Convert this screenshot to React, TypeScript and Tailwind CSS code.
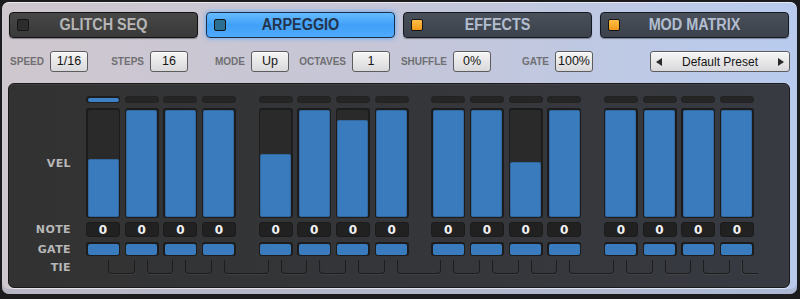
import React from "react";

const velocities = [0.54, 1, 1, 1, 0.58, 1, 0.9, 1, 1, 1, 0.51, 1, 1, 1, 1, 1];

const tabs = [
  { name: "GLITCH SEQ", kind: "dark", led: "bg-[#2c2c2c]" },
  { name: "ARPEGGIO", kind: "active", led: "bg-[#2b6f93]" },
  { name: "EFFECTS", kind: "blue", led: "bg-gradient-to-b from-[#ffc044] to-[#f19a16]" },
  { name: "MOD MATRIX", kind: "blue", led: "bg-gradient-to-b from-[#ffc044] to-[#f19a16]" },
];

const params = [
  { label: "SPEED", value: "1/16", w: "w-[78px]" },
  { label: "STEPS", value: "16", w: "w-[100px]" },
  { label: "MODE", value: "Up", w: "w-[101px]" },
  { label: "OCTAVES", value: "1", w: "w-[101px]" },
  { label: "SHUFFLE", value: "0%", w: "w-[101px]" },
  { label: "GATE", value: "100%", w: "w-[102px]" },
];

const groups = [0, 1, 2, 3];

// rangée de pas : 4 groupes de 4
const StepRow = ({ render }: { render: (i: number) => React.ReactNode }) => (
  <div className="flex gap-[22.67px]">
    {groups.map((g) => (
      <div key={g} className="flex gap-[4.67px]">
        {[0, 1, 2, 3].map((s) => (
          <div key={s} className="w-[34px]">
            {render(g * 4 + s)}
          </div>
        ))}
      </div>
    ))}
  </div>
);

const Label = ({ children }: { children: React.ReactNode }) => (
  <div className="w-[63px] pr-[1px] text-right text-[11px] font-bold leading-none tracking-[0.4px] text-[#b8b8b8] font-['DejaVu_Sans',sans-serif]">
    {children}
  </div>
);

export default function App() {
  return (
    <div className="w-[800px] h-[299px] bg-[#1c1c1e] pt-[2px] pl-[2px] pr-[3px] pb-[5px]">
      <div className="h-full rounded-[7px] bg-gradient-to-r from-[#cfc7ce] via-[#c5c6d8] to-[#b8cbee] shadow-[inset_0_1px_0_rgba(255,255,255,0.6),inset_0_-5px_0_rgba(160,165,185,0.5)] pt-[10px] font-['Liberation_Sans',sans-serif]">
        {/* onglets */}
        <div className="grid grid-cols-4 gap-[8px] pl-[7px] pr-[8px]">
          {tabs.map((t) => (
            <div
              key={t.name}
              className={
                "h-[26px] rounded-[4px] border grid grid-cols-[22px_1fr_22px] items-center " +
                (t.kind === "active"
                  ? "border-[#16304e] bg-gradient-to-b from-[#66bbff] via-[#40a0f8] to-[#4eaafc] shadow-[0_0_5px_rgba(70,160,255,0.9)]"
                  : t.kind === "dark"
                  ? "border-[#121212] bg-gradient-to-b from-[#474747] to-[#393939] shadow-[0_1px_1px_rgba(0,0,0,0.35)]"
                  : "border-[#141820] bg-gradient-to-b from-[#4a505a] to-[#3c424b] shadow-[0_1px_1px_rgba(0,0,0,0.35)]")
              }
            >
              <div className={"ml-[7px] w-[12px] h-[12px] rounded-[2px] border border-[#151515] " + t.led} />
              <div
                className={
                  "text-center text-[16px] font-bold leading-none scale-x-[0.9] " +
                  (t.kind === "active" ? "text-[#24344d]" : t.kind === "dark" ? "text-[#b6b6b6]" : "text-[#b2bed0]")
                }
              >
                {t.name}
              </div>
              <div />
            </div>
          ))}
        </div>

        {/* paramètres */}
        <div className="flex items-center mt-[13px] pl-[8px] pr-[7px] h-[21px]">
          {params.map((p) => (
            <div key={p.label} className={"flex items-center justify-end gap-[6px] " + p.w}>
              <span className="text-[10px] font-bold text-[#6f6f72]">{p.label}</span>
              <div className="w-[38px] h-[21px] rounded-[3px] border border-[#5c5c5e] bg-gradient-to-b from-[#f6f6f6] to-[#d9d9db] flex items-center justify-center text-[12.5px] text-[#151515] shadow-[inset_0_1px_0_#fff]">
                {p.value}
              </div>
            </div>
          ))}
          <div className="ml-auto w-[140px] h-[21px] rounded-[3px] border border-[#5c5c5e] bg-gradient-to-b from-[#f6f6f6] to-[#d9d9db] flex items-center justify-between px-[5px] text-[12px] text-[#151515] shadow-[inset_0_1px_0_#fff]">
            <svg width="6" height="8" viewBox="0 0 6 8">
              <path d="M6 0 L0 4 L6 8 Z" fill="#2a2a2a" />
            </svg>
            <span>Default Preset</span>
            <svg width="6" height="8" viewBox="0 0 6 8">
              <path d="M0 0 L6 4 L0 8 Z" fill="#2a2a2a" />
            </svg>
          </div>
        </div>

        {/* séquenceur */}
        <div className="mt-[11px] ml-[6px] mr-[7px] h-[205px] rounded-[6px] border border-[#1a1a1a] bg-gradient-to-r from-[#323232] to-[#373a41] shadow-[0_1px_0_rgba(255,255,255,0.5),inset_0_1px_0_rgba(255,255,255,0.06)] pt-[12px]">
          {/* indicateurs */}
          <div className="flex">
            <div className="w-[63px]" />
            <div className="ml-[14px]">
              <StepRow
                render={(i) =>
                  i === 0 ? (
                    <div className="h-[7px] rounded-[3px] bg-[#1e1e1e] p-[1.5px]">
                      <div className="h-full rounded-[2px] bg-[#3d82c6]" />
                    </div>
                  ) : (
                    <div className="h-[7px] rounded-[3px] bg-[#252525] border border-[#222]" />
                  )
                }
              />
            </div>
          </div>

          {/* vélocité */}
          <div className="flex items-center mt-[5px]">
            <Label>VEL</Label>
            <div className="ml-[14px]">
              <StepRow
                render={(i) => (
                  <div className="h-[110px] rounded-[3px] bg-[#1c1c1c] p-[1.5px]">
                    <div className="h-full rounded-[2px] bg-[#2a2a2b] flex flex-col justify-end">
                      <div
                        className="rounded-[2px] bg-[#3a7bbd] shadow-[inset_0_0_0_1px_rgba(0,0,0,0.15)]"
                        style={{ height: `${velocities[i] * 100}%` }}
                      />
                    </div>
                  </div>
                )}
              />
            </div>
          </div>

          {/* note */}
          <div className="flex items-center mt-[4px]">
            <Label>NOTE</Label>
            <div className="ml-[14px]">
              <StepRow
                render={() => (
                  <div className="h-[15px] rounded-[3px] bg-[#212122] border border-[#1b1b1b] flex items-center justify-center text-[12px] font-bold text-[#f2f2f2] font-['DejaVu_Sans',sans-serif]">
                    0
                  </div>
                )}
              />
            </div>
          </div>

          {/* gate */}
          <div className="flex items-center mt-[5px]">
            <Label>GATE</Label>
            <div className="ml-[14px]">
              <StepRow
                render={() => (
                  <div className="h-[14px] rounded-[3px] bg-[#1c1c1c] p-[1.5px]">
                    <div className="h-full rounded-[2px] bg-[#3a7bbd]" />
                  </div>
                )}
              />
            </div>
          </div>

          {/* liaisons */}
          <div className="flex items-center mt-[4px]">
            <Label>TIE</Label>
            <div className="ml-[14px] pl-[22px] flex gap-[12px]">
              {velocities.map((_, i) =>
                i === 15 ? (
                  <div key={i} className="w-[16px] h-[14px] border-l border-b border-[#1d1d1d] rounded-bl-[4px] shadow-[-1px_1px_0_rgba(255,255,255,0.05)]" />
                ) : (
                  <div
                    key={i}
                    className={
                      "h-[14px] border-x border-b border-[#1d1d1d] rounded-b-[4px] shadow-[0_1px_0_rgba(255,255,255,0.05)] " +
                      (i % 4 === 3 ? "w-[44.67px]" : "w-[26.67px]")
                    }
                  />
                )
              )}
            </div>
          </div>
        </div>
      </div>
    </div>
  );
}
